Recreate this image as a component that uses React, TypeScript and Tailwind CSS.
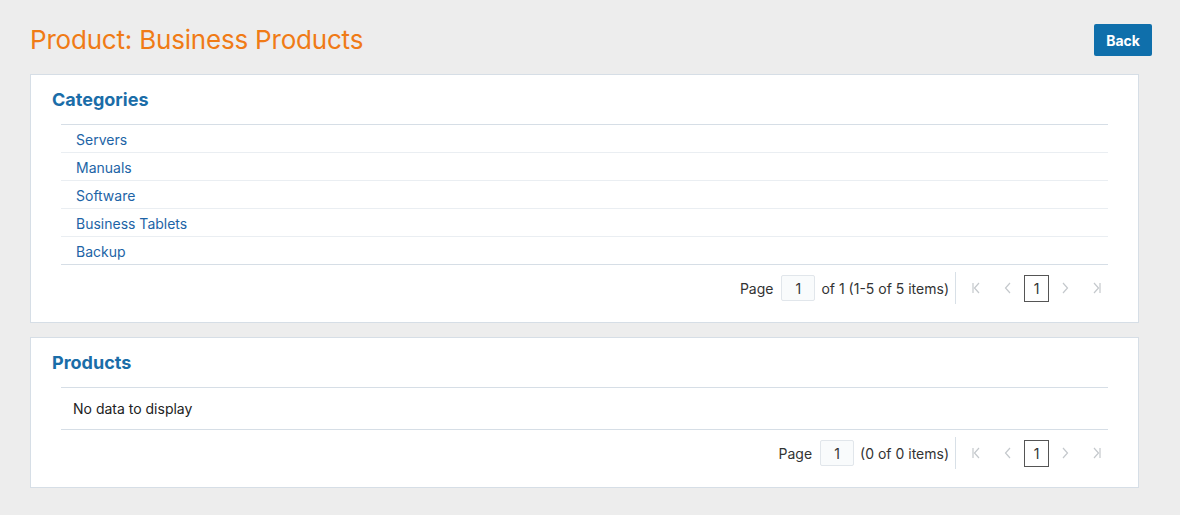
import React from "react";

const font = { fontFamily: "Inter, 'Liberation Sans', sans-serif" };

// Pager chevrons, drawn thin and grey like the disabled grid buttons
const Chevron: React.FC<{ dir: "first" | "prev" | "next" | "last" }> = ({ dir }) => (
  <svg width="10" height="12" viewBox="0 0 10 12" fill="none" stroke="#c4c8cc" strokeWidth="1.2">
    {dir === "first" && (
      <>
        <path d="M2 1v10" />
        <path d="M8 1L3.5 6L8 11" />
      </>
    )}
    {dir === "prev" && <path d="M7 1L2.5 6L7 11" />}
    {dir === "next" && <path d="M3 1L7.5 6L3 11" />}
    {dir === "last" && (
      <>
        <path d="M2 1L6.5 6L2 11" />
        <path d="M8 1v10" />
      </>
    )}
  </svg>
);

const Pager: React.FC<{ summary: string }> = ({ summary }) => (
  <div className="flex items-center justify-end h-[32px] text-[14px] text-[#333]">
    <span>Page</span>
    <div className="ml-[8px] w-[34px] h-[26px] flex items-center justify-center border border-[#e1e6eb] bg-[#f9fbfc] rounded-[2px]">
      1
    </div>
    <span className="ml-[6px]">{summary}</span>
    {/* separator */}
    <div className="ml-[6px] w-px h-[32px] bg-[#d8e0e7]" />
    <div className="ml-[9px] w-[22px] flex justify-center">
      <Chevron dir="first" />
    </div>
    <div className="ml-[10px] w-[22px] flex justify-center">
      <Chevron dir="prev" />
    </div>
    <div className="ml-[5px] w-[25px] h-[27px] border border-[#555] flex items-center justify-center">
      1
    </div>
    <div className="ml-[5px] w-[22px] flex justify-center">
      <Chevron dir="next" />
    </div>
    <div className="ml-[10px] w-[22px] flex justify-center">
      <Chevron dir="last" />
    </div>
  </div>
);

const categories = ["Servers", "Manuals", "Software", "Business Tablets", "Backup"];

export default function App() {
  return (
    <div className="w-[1180px] h-[515px] bg-[#ededed] overflow-hidden" style={font}>
      {/* Header */}
      <div className="flex items-center justify-between pl-[30px] pr-[28px] pt-[24px] h-[56px]">
        <h1 className="text-[26px] leading-[32px] text-[#f07b16] tracking-[-0.2px]">
          Product: Business Products
        </h1>
        <button className="w-[58px] h-[32px] bg-[#0f6fab] text-white text-[14px] font-bold rounded-[2px]">
          Back
        </button>
      </div>

      <div className="ml-[30px] w-[1109px] mt-[18px] flex flex-col gap-[14px]">
        {/* Categories */}
        <div className="bg-white border border-[#d6dee6]">
          <div className="h-[49px] flex items-center pl-[21px] text-[18px] font-bold text-[#1a6da8]">
            Categories
          </div>
          <div className="mx-[30px]">
            <div className="border-t border-[#d6dee6]">
              {categories.map((c, i) => (
                <div
                  key={c}
                  className={`h-[28px] flex items-center pl-[15px] pt-[1px] text-[14px] text-[#1d64a6] border-b ${
                    i === categories.length - 1 ? "border-[#d6dee6]" : "border-[#eaeef2]"
                  }`}
                >
                  {c}
                </div>
              ))}
            </div>
            <div className="pt-[7px] pb-[18px]">
              <Pager summary="of 1 (1-5 of 5 items)" />
            </div>
          </div>
        </div>

        {/* Products */}
        <div className="bg-white border border-[#d6dee6]">
          <div className="h-[49px] flex items-center pl-[21px] text-[18px] font-bold text-[#1a6da8]">
            Products
          </div>
          <div className="mx-[30px]">
            <div className="border-t border-b border-[#d6dee6] h-[43px] flex items-center pl-[12px] text-[14px] text-[#222]">
              No data to display
            </div>
            <div className="pt-[7px] pb-[18px]">
              <Pager summary="(0 of 0 items)" />
            </div>
          </div>
        </div>
      </div>
    </div>
  );
}
